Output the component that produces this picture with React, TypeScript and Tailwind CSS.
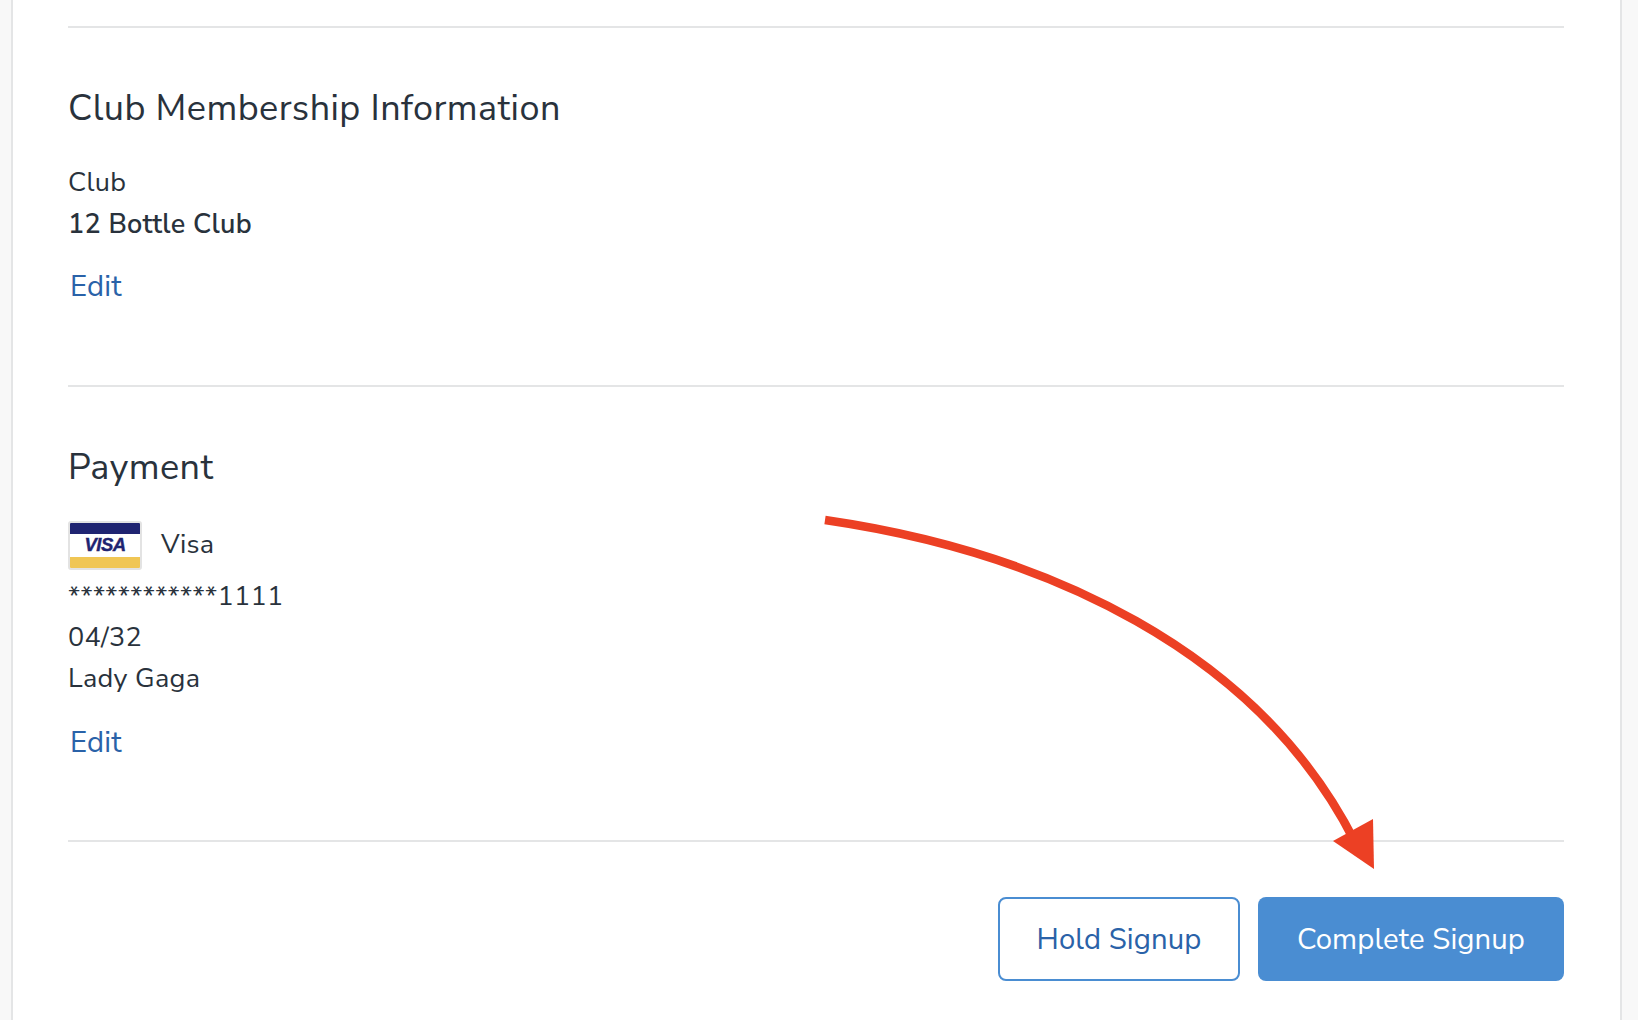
import React from "react"

const FONT = "font-['Nunito_Sans','Noto_Sans','Open_Sans',sans-serif]"

function Divider() {
  return <div className="h-[2px] bg-[#e4e5e6]" />
}

function VisaCard() {
  return (
    <div className="flex h-[49px] w-[74px] flex-col overflow-hidden rounded-[3px] border-2 border-[#e3e3e3] bg-white">
      <div className="h-[11px] bg-[#1f2471]" />
      <div className="flex flex-1 items-center justify-center font-['Liberation_Sans',sans-serif] text-[18.5px] leading-none font-bold italic tracking-[-0.6px] text-[#1f2471] [-webkit-text-stroke:0.4px_#1f2471]">
        VISA
      </div>
      <div className="h-[11px] bg-[#f0c654]" />
    </div>
  )
}

function Edit() {
  return <a className="block pl-[2px] text-[29.3px] tracking-[0.1px] text-[#2a62a8]">Edit</a>
}

function Arrow() {
  return (
    <svg className="absolute top-0 left-0" width="1638" height="1020" viewBox="0 0 1638 1020" fill="none">
      <path d="M825 520C1045 552 1258 650 1355 842" stroke="#ec4024" strokeWidth="8.5" />
      <path d="M1374 869L1373 819L1333 841Z" fill="#ec4024" />
    </svg>
  )
}

export default function App() {
  return (
    <div className={`relative h-[1020px] overflow-hidden bg-[#f8f8f8] pr-[16px] pl-[11px] text-[27px] leading-[42px] tracking-[0.3px] text-[#29323c] ${FONT}`}>
      <div className="h-full border-x-2 border-[#e4e5e6] bg-white pt-[26px] pr-[56px] pl-[55px]">
        <Divider />
        <section className="h-[357px] pt-[55px]">
          <h2 className="text-[36px] leading-[52px] font-normal tracking-[0.45px]">Club Membership Information</h2>
          <div className="mt-[27px]">Club</div>
          <div className="font-semibold">12 Bottle Club</div>
          <div className="mt-[19px]">
            <Edit />
          </div>
        </section>
        <Divider />
        <section className="h-[453px] pt-[55px]">
          <h2 className="text-[36px] leading-[52px] font-normal tracking-[0.45px]">Payment</h2>
          <div className="mt-[26px] flex h-[50px] items-center gap-[19px]">
            <VisaCard />
            <span>Visa</span>
          </div>
          <div className="mt-[6px] leading-[41px]">
            <div>************1111</div>
            <div>04/32</div>
            <div>Lady Gaga</div>
          </div>
          <div className="mt-[22px]">
            <Edit />
          </div>
        </section>
        <Divider />
        <div className="mt-[55px] flex justify-end gap-[18px]">
          <button className="h-[84px] w-[242px] rounded-[8px] border-2 border-[#4a8dd2] bg-white text-[29.3px] tracking-[0.1px] text-[#2a62a8]">
            Hold Signup
          </button>
          <button className="h-[84px] w-[306px] rounded-[8px] bg-[#4a8dd2] text-[29.3px] tracking-[0.1px] text-white">
            Complete Signup
          </button>
        </div>
      </div>
      <Arrow />
    </div>
  )
}
